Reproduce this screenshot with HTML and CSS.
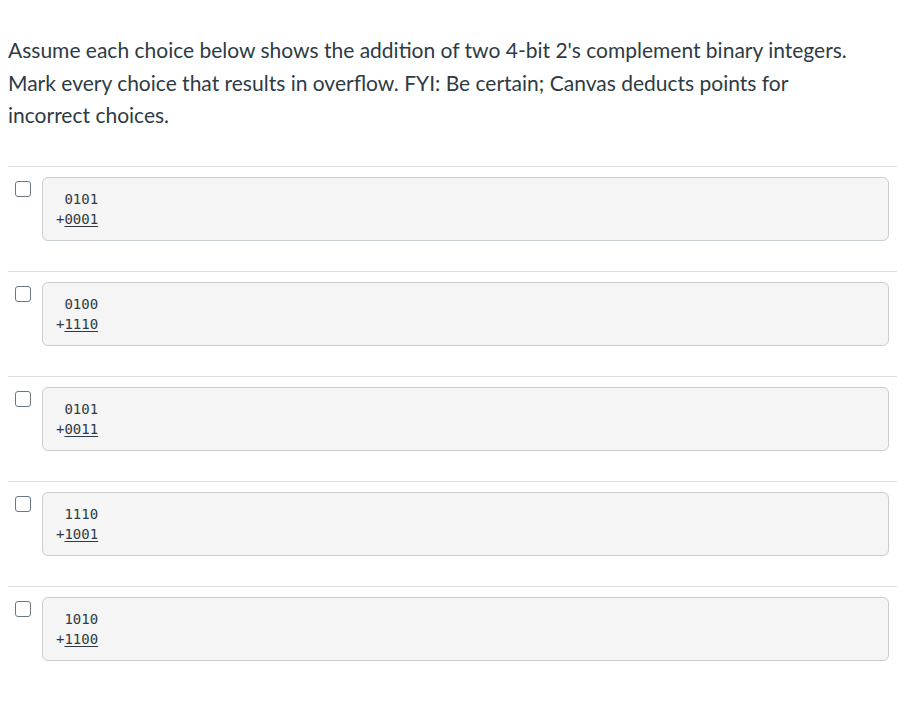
FILE: index.html
```html
<!DOCTYPE html>
<html>
<head>
<meta charset="utf-8">
<link rel="stylesheet" href="styles.css">
</head>
<body>
<div class="question">
  <p class="prompt">Assume each choice below shows the addition of two 4-bit 2's complement binary integers. Mark every choice that results in overflow. FYI: Be certain; Canvas deducts points for incorrect choices.</p>
  <div class="answers">
    <div class="answer"><span class="check"></span><div class="code"><div class="line"> 0101</div><div class="line">+<u>0001</u></div></div></div>
    <div class="answer"><span class="check"></span><div class="code"><div class="line"> 0100</div><div class="line">+<u>1110</u></div></div></div>
    <div class="answer"><span class="check"></span><div class="code"><div class="line"> 0101</div><div class="line">+<u>0011</u></div></div></div>
    <div class="answer"><span class="check"></span><div class="code"><div class="line"> 1110</div><div class="line">+<u>1001</u></div></div></div>
    <div class="answer"><span class="check"></span><div class="code"><div class="line"> 1010</div><div class="line">+<u>1100</u></div></div></div>
  </div>
</div>
</body>
</html>
```
FILE: styles.css
```css
html, body {
  margin: 0;
  padding: 0;
  background: #ffffff;
}
body {
  padding: 0 18px 0 8px;
  font-family: Lato, "Noto Sans", sans-serif;
  color: #2d3b45;
}
.prompt {
  margin: 0;
  max-width: 850px;
  padding-top: 34px;
  font-size: 21px;
  line-height: 32.5px;
  padding-bottom: 34px;
}
.answers {
  display: flex;
  flex-direction: column;
}
.answer {
  display: flex;
  align-items: flex-start;
  gap: 11px;
  border-top: 1px solid #dcdfe1;
  padding: 10px 8px 30px 7px;
}
.check {
  flex: none;
  width: 14px;
  height: 14px;
  margin-top: 4px;
  border: 1px solid #6b7780;
  border-radius: 3px;
  background: #fff;
}
.code {
  flex: 1;
  background: #f5f5f5;
  border: 1px solid #c7cdd1;
  border-radius: 6px;
  padding: 11px 13px 11px;
}
.line {
  white-space: pre;
  font-family: "DejaVu Sans Mono", monospace;
  font-size: 14px;
  line-height: 20px;
  color: #2d3b45;
}
.line u {
  text-decoration: underline;
  text-underline-offset: 2px;
}
```
